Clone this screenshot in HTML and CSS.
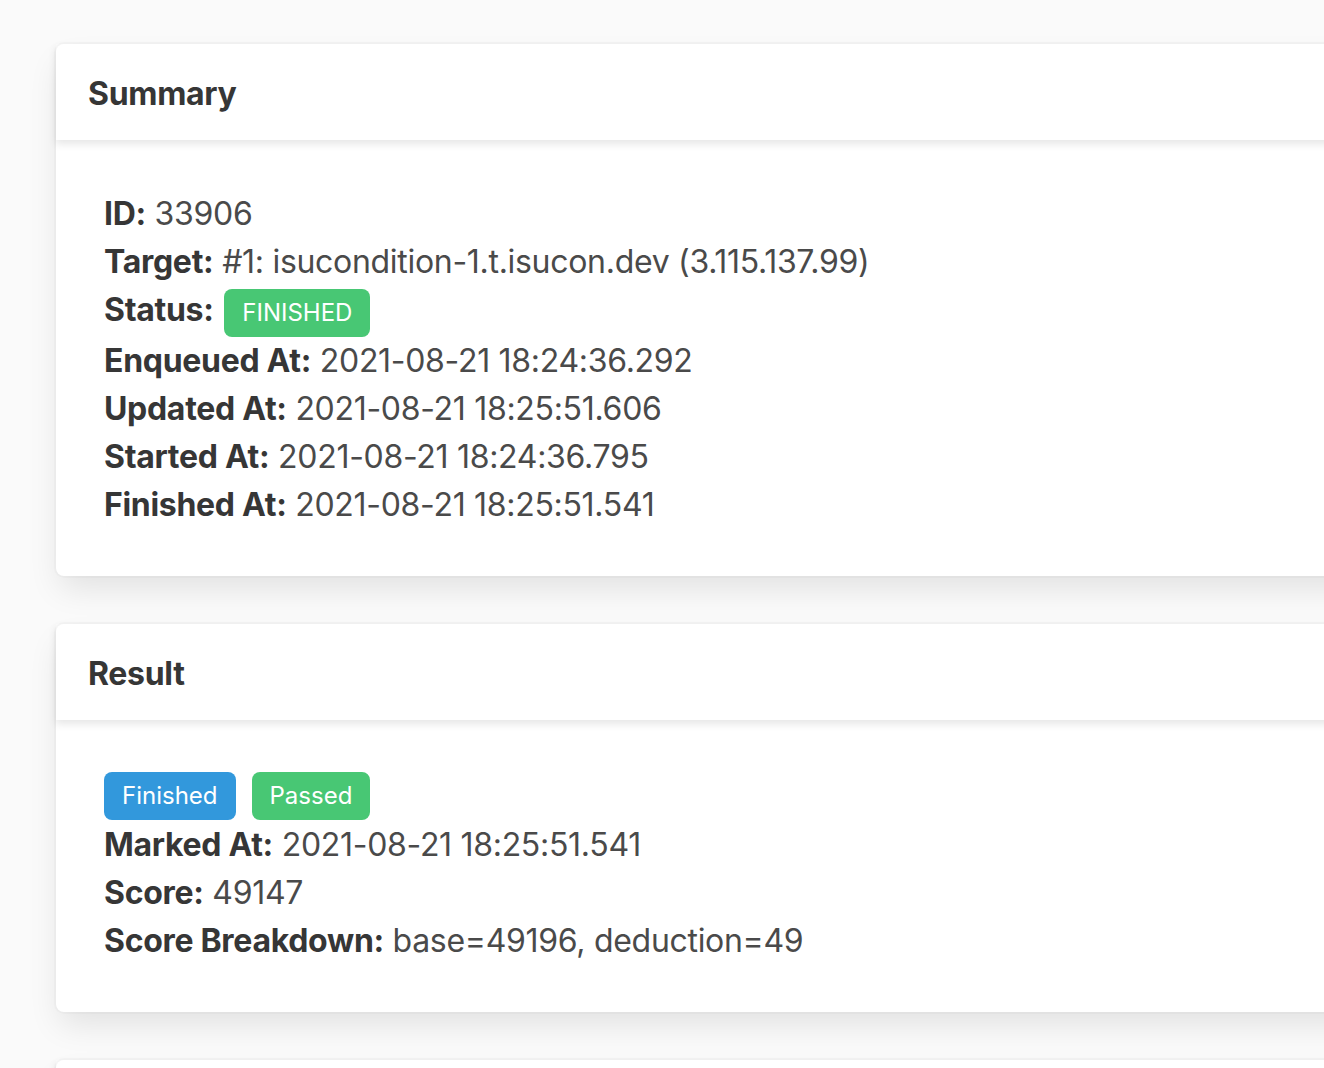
FILE: index.html
```html
<!DOCTYPE html>
<html lang="en">
<head>
    <meta charset="UTF-8">
    <meta name="viewport" content="width=device-width, initial-scale=1.0">
    <title>Job 33906</title>
    <link rel="stylesheet" href="styles.css">
</head>
<body>
    <div class="container">
        <div class="card">
            <header class="card-header">
                <p class="card-header-title">Summary</p>
            </header>
            <div class="card-content">
                <div class="field-line"><strong>ID:</strong> 33906</div>
                <div class="field-line"><strong>Target:</strong> #1: isucondition-1.t.isucon.dev (3.115.137.99)</div>
                <div class="field-line"><strong>Status:</strong> <span class="tag is-success">FINISHED</span></div>
                <div class="field-line"><strong>Enqueued At:</strong> 2021-08-21 18:24:36.292</div>
                <div class="field-line"><strong>Updated At:</strong> 2021-08-21 18:25:51.606</div>
                <div class="field-line"><strong>Started At:</strong> 2021-08-21 18:24:36.795</div>
                <div class="field-line"><strong>Finished At:</strong> 2021-08-21 18:25:51.541</div>
            </div>
        </div>

        <div class="card">
            <header class="card-header">
                <p class="card-header-title">Result</p>
            </header>
            <div class="card-content">
                <div class="tags">
                    <span class="tag is-info">Finished</span>
                    <span class="tag is-success">Passed</span>
                </div>
                <div class="field-line"><strong>Marked At:</strong> 2021-08-21 18:25:51.541</div>
                <div class="field-line"><strong>Score:</strong> 49147</div>
                <div class="field-line"><strong>Score Breakdown:</strong> base=49196, deduction=49</div>
            </div>
        </div>

        <div class="card">
            <header class="card-header">
                <p class="card-header-title">Execution</p>
            </header>
            <div class="card-content"></div>
        </div>
    </div>
</body>
</html>
```

FILE: styles.css
```css
* {
    margin: 0;
    padding: 0;
    box-sizing: border-box;
}

html {
    background: #fafafa;
}

body {
    font-family: Inter, "Noto Sans", "Liberation Sans", sans-serif;
    font-size: 32px;
    line-height: 1.5;
    letter-spacing: -0.3px;
    color: #4a4a4a;
    overflow: hidden;
}

strong {
    color: #363636;
    font-weight: 700;
}

.container {
    padding: 44px 0 0 56px;
    width: 1500px;
}

.card {
    background: #fff;
    border-radius: 8px;
    box-shadow: 0 16px 32px -4px rgba(10, 10, 10, 0.1), 0 0 0 2px rgba(10, 10, 10, 0.02);
    margin-bottom: 48px;
}

.card-header {
    display: flex;
    box-shadow: 0 4px 8px rgba(10, 10, 10, 0.1);
}

.card-header-title {
    padding: 26px 32px 22px;
    font-weight: 700;
    color: #363636;
}

.card-content {
    padding: 50px 48px 47px;
}

.field-line .tag {
    margin-left: 2px;
}

.tags {
    display: flex;
    gap: 16px;
    margin: 2px 0 1px;
}

.tag {
    display: inline-flex;
    align-items: center;
    height: 48px;
    padding: 0 18px;
    border-radius: 8px;
    font-size: 24px;
    font-weight: 400;
    letter-spacing: 0;
    color: #fff;
    vertical-align: baseline;
}

.tag.is-success {
    background: #48c774;
}

.tag.is-info {
    background: #3298dc;
}
```
